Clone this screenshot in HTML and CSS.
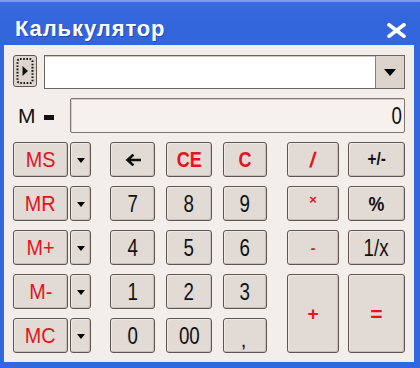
FILE: index.html
```html
<!DOCTYPE html>
<html lang="ru">
<head>
<meta charset="utf-8">
<title>Калькулятор</title>
<link rel="stylesheet" href="styles.css">
</head>
<body>
<div class="window">
  <div class="titlebar">
    <span class="title">Калькулятор</span>
    <span class="close">
      <svg width="19" height="15" viewBox="0 0 19 15"><path d="M2 1.8 L17 13.2 M17 1.8 L2 13.2" stroke="#fff" stroke-width="3.6" stroke-linecap="round"/></svg>
    </span>
  </div>
  <div class="client">
    <div class="top-row">
      <div class="icon-btn">
        <svg width="20" height="28" viewBox="0 0 20 28">
          <rect x="2.5" y="2" width="15" height="24" rx="2.5" fill="none" stroke="#111" stroke-width="2" stroke-dasharray="1.6 1.6"/>
          <path d="M7.5 9 L13 14 L7.5 19 Z" fill="#111"/>
        </svg>
      </div>
      <div class="combo">
        <div class="combo-field"></div>
        <div class="combo-btn"><span class="tri"></span></div>
      </div>
    </div>
    <div class="mem-row">
      <div class="mem-label"><span>M</span><span class="bar"></span></div>
      <div class="display"><span class="digit">0</span></div>
    </div>
    <div class="keys">
      <div class="mem-keys">
        <button class="key red"><span class="lbl">MS</span></button><button class="key drop"><span class="tri small"></span></button>
        <button class="key red"><span class="lbl">MR</span></button><button class="key drop"><span class="tri small"></span></button>
        <button class="key red"><span class="lbl">M+</span></button><button class="key drop"><span class="tri small"></span></button>
        <button class="key red"><span class="lbl">M-</span></button><button class="key drop"><span class="tri small"></span></button>
        <button class="key red"><span class="lbl">MC</span></button><button class="key drop"><span class="tri small"></span></button>
      </div>
      <div class="num-keys">
        <button class="key" aria-label="Backspace"><svg class="arrow" width="16" height="12" viewBox="0 0 16 12"><path d="M15 6 H3 M7.5 1.5 L2.5 6 L7.5 10.5" fill="none" stroke="#111" stroke-width="2.6" stroke-linecap="square"/></svg></button>
        <button class="key red"><span class="lbl cond">CE</span></button>
        <button class="key red"><span class="lbl cond">C</span></button>
        <button class="key"><span class="digit">7</span></button>
        <button class="key"><span class="digit">8</span></button>
        <button class="key"><span class="digit">9</span></button>
        <button class="key"><span class="digit">4</span></button>
        <button class="key"><span class="digit">5</span></button>
        <button class="key"><span class="digit">6</span></button>
        <button class="key"><span class="digit">1</span></button>
        <button class="key"><span class="digit">2</span></button>
        <button class="key"><span class="digit">3</span></button>
        <button class="key"><span class="digit">0</span></button>
        <button class="key"><span class="digit">00</span></button>
        <button class="key"><span class="dot">,</span></button>
      </div>
      <div class="op-keys">
        <button class="key red"><span class="op slash">/</span></button>
        <button class="key"><span class="op small-b">+/-</span></button>
        <button class="key red"><span class="op tiny star">×</span></button>
        <button class="key"><span class="op pct">%</span></button>
        <button class="key red"><span class="op tiny">-</span></button>
        <button class="key"><span class="digit">1/x</span></button>
        <button class="key red tall"><span class="op plus">+</span></button>
        <button class="key red tall"><span class="op plus eq">=</span></button>
      </div>
    </div>
  </div>
</div>
</body>
</html>
```
FILE: styles.css
```css
html, body {
  margin: 0;
  padding: 0;
}
body {
  width: 420px;
  height: 368px;
  overflow: hidden;
  font-family: "Liberation Sans", Arial, sans-serif;
}
.window {
  width: 420px;
  height: 368px;
  box-sizing: border-box;
  background: #3466dd;
  display: flex;
  flex-direction: column;
  border-top: 2px solid #7d9de8;
}
.titlebar {
  height: 43px;
  box-sizing: border-box;
  display: flex;
  align-items: center;
  justify-content: space-between;
  padding: 10px 15px 0 15px;
  background: linear-gradient(#3a6be2, #3365dc 40%, #3366de);
}
.title {
  color: #fff;
  font-weight: bold;
  font-size: 22px;
  letter-spacing: 0.9px;
  text-shadow: 1px 1px 0 #2448b0;
}
.close {
  display: flex;
  margin-right: -1px;
  margin-top: 4px;
}
.client {
  flex: 1;
  margin: 0 6px 6px 4px;
  background: #f4eeea;
  padding: 10px 9px 0 9px;
  display: flex;
  flex-direction: column;
}
.top-row {
  display: flex;
  align-items: flex-start;
  height: 34px;
}
.icon-btn {
  width: 24px;
  height: 32px;
  box-sizing: border-box;
  border: 1px solid #5e5550;
  border-radius: 3px;
  background: #ddd5d0;
  display: flex;
  align-items: center;
  justify-content: center;
}
.combo {
  margin-left: 7px;
  flex: 1;
  height: 34px;
  box-sizing: border-box;
  border: 1px solid #6f6560;
  background: #fff;
  display: flex;
}
.combo-field {
  flex: 1;
  border-top: 1px solid #cfc7c2;
}
.combo-btn {
  width: 28px;
  background: #dcd3cd;
  border-left: 1px solid #8a807a;
  display: flex;
  align-items: center;
  justify-content: center;
}
.tri {
  width: 0;
  height: 0;
  border-left: 6px solid transparent;
  border-right: 6px solid transparent;
  border-top: 7px solid #000;
}
.tri.small {
  border-left-width: 4px;
  border-right-width: 4px;
  border-top-width: 5px;
  margin-top: 1px;
}
.mem-row {
  margin-top: 9px;
  display: flex;
  height: 35px;
}
.mem-label {
  width: 57px;
  box-sizing: border-box;
  padding-left: 5px;
  display: flex;
  align-items: center;
  font-size: 21px;
  color: #111;
}
.mem-label .bar {
  display: inline-block;
  width: 10px;
  height: 5px;
  background: #111;
  margin-left: 8px;
  margin-top: 3px;
}
.display {
  flex: 1;
  box-sizing: border-box;
  border: 1px solid #7e736e;
  border-radius: 2px;
  background: #f7f1ed;
  display: flex;
  align-items: center;
  justify-content: flex-end;
  padding-right: 1px;
  box-shadow: inset 1px 1px 0 #d9d0cb;
}
.digit {
  display: inline-block;
  font-size: 24px;
  color: #111;
  transform: scaleX(0.78);
}
.keys {
  margin-top: 9px;
  display: flex;
}
.key {
  margin: 0;
  padding: 0;
  height: 35px;
  box-sizing: border-box;
  border: 1px solid #5f5651;
  border-radius: 3px;
  background: #e2dad5;
  box-shadow: inset 1px 1px 0 #efe9e6, inset -1px -1px 0 #c9c0bb;
  font-family: "Liberation Sans", Arial, sans-serif;
  color: #111;
  display: flex;
  align-items: center;
  justify-content: center;
  overflow: hidden;
}
.key.red {
  color: #e3141c;
}
.mem-keys {
  display: grid;
  grid-template-columns: 55px 21px;
  column-gap: 2px;
  row-gap: 9px;
}
.lbl {
  display: inline-block;
  font-size: 22px;
  transform: scaleX(0.9);
}
.lbl.cond {
  font-size: 22px;
  transform: scaleX(0.82);
  font-weight: bold;
}
.num-keys {
  margin-left: 19px;
  display: grid;
  grid-template-columns: 45px 46px 44px;
  column-gap: 11px;
  row-gap: 9px;
}
.arrow {
  display: block;
}
.dot {
  font-size: 20px;
  color: #111;
  margin-top: 10px;
  margin-left: -3px;
}
.op-keys {
  margin-left: 20px;
  display: grid;
  grid-template-columns: 52px 57px;
  grid-template-rows: 35px 35px 35px 35px 35px;
  column-gap: 9px;
  row-gap: 9px;
}
.key.tall {
  grid-row: span 2;
  height: auto;
}
.op {
  display: inline-block;
}
.slash {
  font-size: 21px;
  font-weight: bold;
  transform: skewX(-8deg);
}
.small-b {
  font-size: 18px;
  font-weight: bold;
  transform: scaleX(0.85);
  color: #111;
}
.tiny {
  font-size: 14px;
  font-weight: bold;
}
.tiny.star {
  font-size: 13px;
  margin-top: -8px;
}
.pct {
  font-size: 21px;
  font-weight: bold;
  color: #111;
  transform: scaleX(0.85);
}
.plus {
  font-size: 19px;
  font-weight: bold;
}
.plus.eq {
  font-size: 21px;
}
```
